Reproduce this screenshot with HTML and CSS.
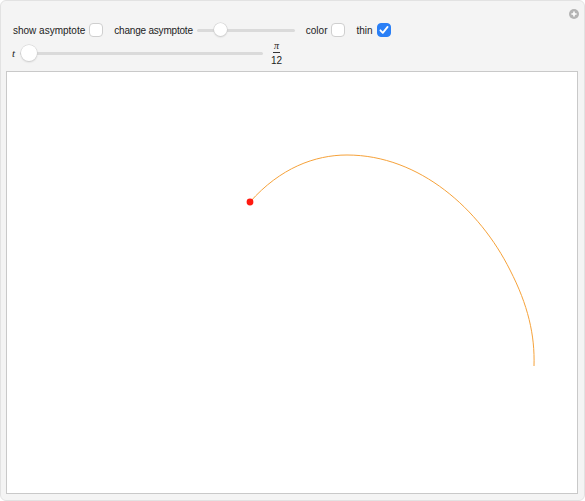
FILE: index.html
```html
<!DOCTYPE html>
<html lang="en">
<head>
    <meta charset="UTF-8">
    <title>Spiral with asymptote</title>
    <link rel="stylesheet" href="styles.css">
</head>
<body>
    <div class="panel">
        <div class="plus-button">
            <svg width="10" height="10" viewBox="0 0 10 10">
                <circle cx="5" cy="5" r="5" fill="#b4b4b4"/>
                <path d="M5 2.4v5.2M2.4 5h5.2" stroke="#fff" stroke-width="1.6"/>
            </svg>
        </div>

        <div class="controls">
            <span class="label">show asymptote</span>
            <span class="checkbox"></span>
            <span class="label gap-left narrow">change asymptote</span>
            <div class="slider small">
                <div class="track"></div>
                <div class="thumb" style="left: 17px;"></div>
            </div>
            <span class="label gap-left">color</span>
            <span class="checkbox"></span>
            <span class="label gap-left">thin</span>
            <span class="checkbox checked">
                <svg width="14" height="14" viewBox="0 0 14 14">
                    <path d="M3.4 7.3l2.4 2.6 4.8-6" fill="none" stroke="#fff" stroke-width="1.8" stroke-linecap="round" stroke-linejoin="round"/>
                </svg>
            </span>
        </div>

        <div class="controls second">
            <span class="var-t">t</span>
            <div class="slider wide">
                <div class="track"></div>
                <div class="thumb" style="left: 1px;"></div>
            </div>
            <div class="fraction">
                <span class="num">&pi;</span>
                <span class="den">12</span>
            </div>
        </div>

        <div class="plot">
            <svg width="570" height="421" viewBox="7 72 570 421">
                <!-- curve drawn in page coordinates -->
                <path d="M250 202 C 280 168, 315 155, 347 155 C 420 155, 480 210, 510 270 C 528 305, 535 335, 534 366"
                      fill="none" stroke="#f6a23a" stroke-width="1"/>
                <circle cx="250" cy="202" r="3.4" fill="#ff1a10"/>
            </svg>
        </div>
    </div>
</body>
</html>
```

FILE: styles.css
```css
body {
    margin: 0;
    padding: 0;
    background: #ffffff;
    font-family: "Liberation Sans", Arial, sans-serif;
    color: #222;
}

.panel {
    position: relative;
    width: 585px;
    height: 501px;
    box-sizing: border-box;
    padding: 21px 6px 6px 5px;
    background-color: #f4f4f4;
    border: 1px solid #e2e2e2;
    border-radius: 6px;
    display: flex;
    flex-direction: column;
}

.plus-button {
    position: absolute;
    top: 8px;
    right: 5px;
    width: 10px;
    height: 10px;
}

.plus-button svg {
    display: block;
}

.controls {
    display: flex;
    align-items: center;
    height: 16px;
    padding-left: 7px;
}

.controls.second {
    height: 24px;
    margin-top: 3px;
    padding-left: 6px;
}

.label {
    font-size: 10px;
    white-space: nowrap;
    margin-right: 4px;
}

.label.narrow {
    letter-spacing: -0.2px;
}

.gap-left {
    margin-left: 11px;
}

.checkbox {
    width: 14px;
    height: 14px;
    box-sizing: border-box;
    border: 1px solid #cfcfcf;
    border-radius: 4px;
    background: #fff;
    flex-shrink: 0;
}

.checkbox.checked {
    background: #2a7ff6;
    border-color: #2a7ff6;
}

.checkbox svg {
    display: block;
    margin: -1px;
}

.slider {
    position: relative;
    height: 16px;
    flex-shrink: 0;
}

.slider.small {
    width: 98px;
}

.slider.wide {
    width: 243px;
    margin-left: 5px;
}

.track {
    position: absolute;
    left: 0;
    right: 0;
    top: 50%;
    height: 3px;
    margin-top: -1px;
    background: #dadada;
    border-radius: 2px;
}

.thumb {
    position: absolute;
    top: 1px;
    width: 13px;
    height: 13px;
    border-radius: 50%;
    background: #fff;
    box-shadow: 0 0 0 0.5px #d0d0d0, 0 1px 2px rgba(0, 0, 0, 0.18);
}

.slider.wide .thumb {
    top: 0;
    width: 16px;
    height: 16px;
}

.var-t {
    font-family: "Liberation Serif", serif;
    font-style: italic;
    font-size: 11px;
    width: 3px;
}

.fraction {
    display: flex;
    flex-direction: column;
    align-items: center;
    margin-left: 8px;
    font-size: 10px;
    line-height: 11px;
}

.fraction .num {
    font-family: "Liberation Serif", serif;
    font-style: italic;
    padding: 0 1px 1px;
    border-bottom: 1px solid #333;
}

.fraction .den {
    padding-top: 2px;
}

.plot {
    flex: 1;
    margin-top: 6px;
    background: #fff;
    border: 1px solid #c9c9c9;
}

.plot svg {
    display: block;
}
```
